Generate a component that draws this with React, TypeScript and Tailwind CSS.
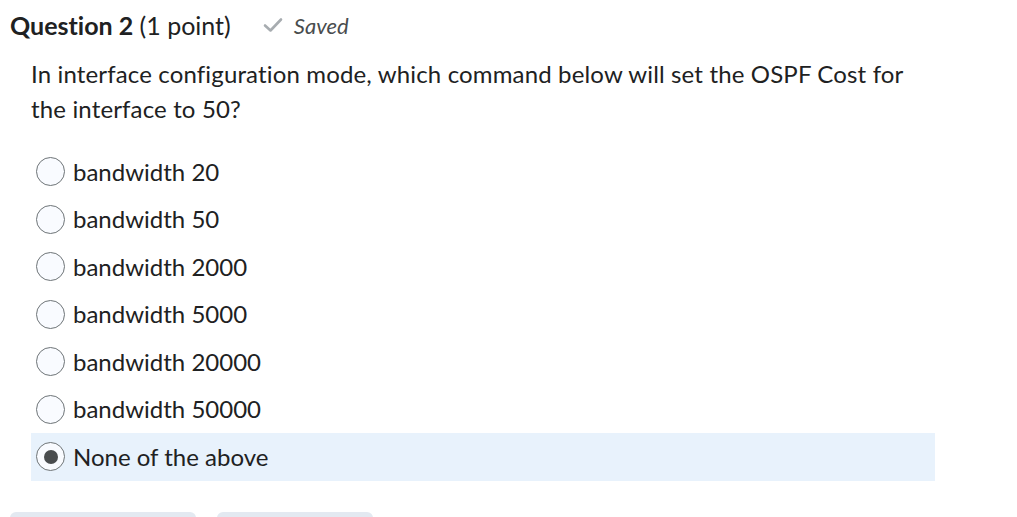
import React, { useState } from 'react';

const OPTIONS = [
  'bandwidth 20',
  'bandwidth 50',
  'bandwidth 2000',
  'bandwidth 5000',
  'bandwidth 20000',
  'bandwidth 50000',
  'None of the above',
];

function CheckIcon() {
  return (
    <svg width="20" height="16" viewBox="0 0 20 16" fill="none">
      <path d="M2 8.5 L7.5 13.5 L18 2.5" stroke="#a7acb0" strokeWidth="2.6" strokeLinecap="round" strokeLinejoin="round" />
    </svg>
  );
}

export default function App() {
  const [selected, setSelected] = useState(6);

  return (
    <div className="w-[1017px] h-[517px] overflow-hidden bg-white text-[#202122] font-['Lato',sans-serif] [font-variant-ligatures:none]">
      {/* Header */}
      <div className="flex items-center pl-[10px] pt-[8px] h-[34px] box-content">
        <h2 className="text-[25px] leading-[34px]">
          <span className="font-bold">Question 2</span> <span>(1 point)</span>
        </h2>
        <div className="flex items-center ml-[32px] gap-[11px] text-[#494c4e]">
          <CheckIcon />
          <span className="italic text-[22px]">Saved</span>
        </div>
      </div>

      {/* Question */}
      <div className="pl-[31px] pt-[14px]">
        <p className="text-[24px] leading-[35px] tracking-[0.15px] w-[900px]">
          In interface configuration mode, which command below will set the OSPF Cost for the interface to 50?
        </p>
      </div>

      {/* Options */}
      <div className="ml-[31px] mt-[22px] w-[904px] flex flex-col">
        {OPTIONS.map((opt, i) => {
          const isSel = selected === i;
          return (
            <label
              key={opt}
              onClick={() => setSelected(i)}
              className={`flex items-center h-[47.5px] pl-[5px] cursor-pointer ${isSel ? 'bg-[#e8f2fc]' : ''}`}
            >
              <span className="w-[29px] h-[29px] rounded-full border-[1.5px] border-[#6e7477] bg-[#f9fbff] flex items-center justify-center shrink-0">
                {isSel && <span className="w-[14px] h-[14px] rounded-full bg-[#494c4e]" />}
              </span>
              <span className="ml-[8px] text-[24px] leading-[30px]">{opt}</span>
            </label>
          );
        })}
      </div>

      {/* Buttons */}
      <div className="flex gap-[21px] pl-[10px] mt-[31px]">
        <div className="w-[186px] h-[40px] rounded-[6px] bg-[#e3e9f1]" />
        <div className="w-[156px] h-[40px] rounded-[6px] bg-[#e3e9f1]" />
      </div>
    </div>
  );
}
